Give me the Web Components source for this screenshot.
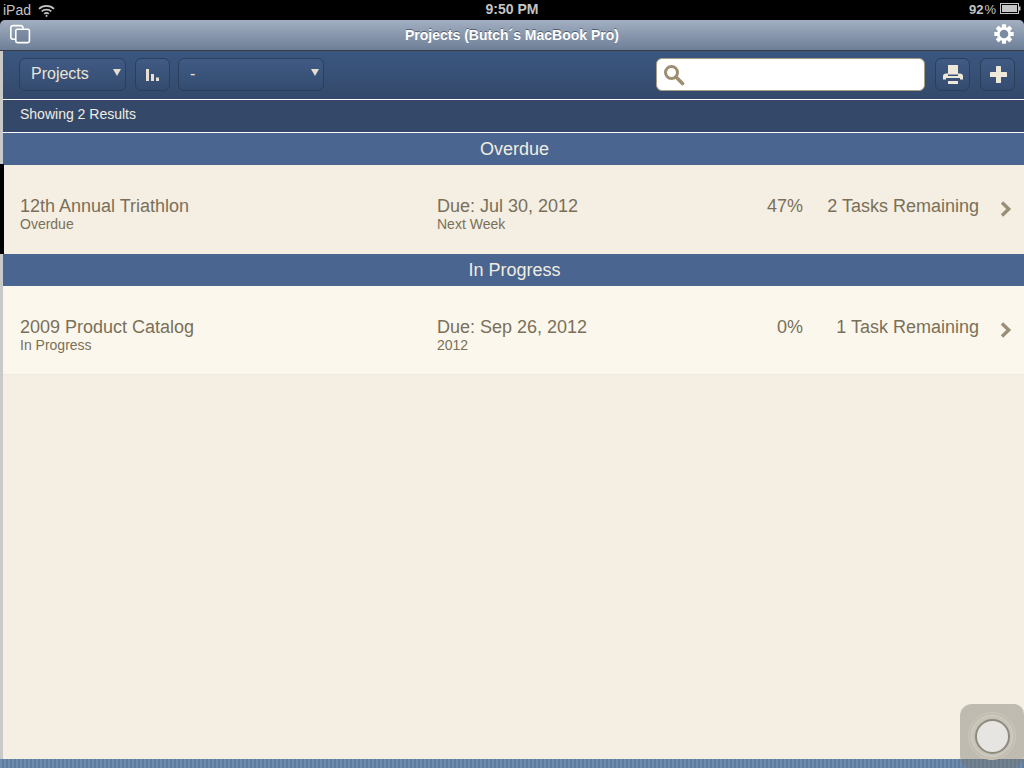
<!DOCTYPE html>
<html>
<head>
<meta charset="utf-8">
<title>Projects</title>
<style>
    html, body { margin: 0; padding: 0; height: 100%; overflow: hidden; background: #000; }
    body { font-family: "Liberation Sans", Arial, sans-serif; }
</style>
</head>
<body>
<project-app>
    <status-bar slot="status"></status-bar>
    <title-bar slot="title">Projects (Butch´s MacBook Pro)</title-bar>
    <tool-bar slot="tools">
        <drop-select style="width:107px">Projects</drop-select>
        <tool-button style="margin-left:9px" icon="chart"></tool-button>
        <drop-select style="width:146px;margin-left:8px">-</drop-select>
        <search-box style="margin-left:auto"></search-box>
        <tool-button style="margin-left:10px" icon="print"></tool-button>
        <tool-button style="margin-left:10px" icon="plus"></tool-button>
    </tool-bar>
    <results-bar slot="results">Showing 2 Results</results-bar>
    <section-head>Overdue</section-head>
    <project-row rail="#000" name="12th Annual Triathlon" state="Overdue" due="Due: Jul 30, 2012" when="Next Week" pct="47%" tasks="2 Tasks Remaining"></project-row>
    <section-head>In Progress</section-head>
    <project-row light name="2009 Product Catalog" state="In Progress" due="Due: Sep 26, 2012" when="2012" pct="0%" tasks="1 Task Remaining"></project-row>
    <assistive-touch slot="overlay"></assistive-touch>
</project-app>

<script>
var appTpl = document.createElement('template');
appTpl.innerHTML = `
    <style>
        :host { display: flex; flex-direction: column; width: 1024px; height: 768px; position: relative; overflow: hidden; background: #000; }
        .body { flex: 1; display: flex; flex-direction: column; background: #f4eee3; border-left: 3px solid #c9c9c9; min-height: 0; }
        .list { flex: 1; display: flex; flex-direction: column; min-height: 0; }
        .foot { height: 9px; background: repeating-linear-gradient(90deg, #6f8cac 0, #6f8cac 2px, #5f7d9f 2px, #5f7d9f 4px); }
    </style>
    <slot name="status"></slot>
    <slot name="title"></slot>
    <div class="body">
        <slot name="tools"></slot>
        <slot name="results"></slot>
        <div class="list"><slot></slot></div>
    </div>
    <div class="foot"></div>
    <slot name="overlay"></slot>
`;
customElements.define('project-app', class extends HTMLElement {
    constructor() {
        super();
        this.attachShadow({mode: 'open'}).appendChild(appTpl.content.cloneNode(true));
    }
});

var statusTpl = document.createElement('template');
statusTpl.innerHTML = `
    <style>
        :host { display: flex; align-items: center; justify-content: space-between; height: 20px; flex: none; background: #000; color: #c4c4c4; font-size: 14px; padding: 0 3px 0 3px; position: relative; }
        .left, .right { display: flex; align-items: center; }
        .left svg { margin-left: 7px; }
        .time { position: absolute; left: 0; right: 0; top: 1px; text-align: center; font-weight: bold; line-height: 17px; font-size: 14px; }
        .right span { font-size: 13px; margin-right: 4px; font-weight: bold; }
        .right span em { font-style: normal; font-weight: normal; margin-left: 1px; }
        .right { margin-top: -2px; }
    </style>
    <div class="left">iPad
        <svg width="17" height="13" viewBox="0 0 17 13" fill="none" stroke="#c4c4c4" stroke-width="1.8">
            <path d="M1 4.8C5 .9 12 .9 16 4.8"/>
            <path d="M3.7 7.4C6.2 5.1 10.8 5.1 13.3 7.4"/>
            <path d="M6.2 9.9C7.5 8.8 9.5 8.8 10.8 9.9"/>
            <path d="M8.5 10.6l1.3 1.4-1.3 1-1.3-1z" fill="#c4c4c4" stroke="none"/>
        </svg>
    </div>
    <div class="time">9:50 PM</div>
    <div class="right"><span>92<em>%</em></span>
        <svg width="21" height="12" viewBox="0 0 21 12">
            <rect x=".5" y=".5" width="18" height="10" fill="none" stroke="#c4c4c4"/>
            <rect x="2" y="2" width="15" height="7" fill="#c4c4c4"/>
            <rect x="19" y="3.5" width="1.5" height="4" fill="#c4c4c4"/>
        </svg>
    </div>
`;
customElements.define('status-bar', class extends HTMLElement {
    constructor() {
        super();
        this.attachShadow({mode: 'open'}).appendChild(statusTpl.content.cloneNode(true));
    }
});

var titleTpl = document.createElement('template');
titleTpl.innerHTML = `
    <style>
        :host { display: flex; align-items: center; justify-content: center; flex: none; padding-bottom: 1px; box-sizing: content-box;
            border-radius: 5px 5px 0 0; background: linear-gradient(#a3afc0, #6d7f98); border-bottom: 1px solid #3a3d42;
            color: #fff; font-size: 14px; font-weight: bold; text-shadow: 0 -1px 0 rgba(40,50,70,.6); position: relative; height: 29px; }
        svg { position: absolute; }
        .tabs { left: 9px; top: 4px; }
        .gear { right: 10px; top: 4px; }
    </style>
    <svg class="tabs" width="22" height="20" viewBox="0 0 22 20" fill="none" stroke="#fff" stroke-width="1.6">
        <path d="M6 15.2H4C2.6 15.2 1.8 14.4 1.8 13V3.8C1.8 2.4 2.6 1.6 4 1.6H11.5C13 1.6 14 2.4 14.3 4.5"/>
        <rect x="6.8" y="5.2" width="13.6" height="13.4" rx="1.5" fill="#5f6f87" fill-opacity=".35"/>
    </svg>
    <svg class="gear" width="20" height="20" viewBox="0 0 20 20">
        <g fill="#fff">
            <rect x="7.9" y=".3" width="4.2" height="19.4" rx=".6"/>
            <rect x="7.9" y=".3" width="4.2" height="19.4" rx=".6" transform="rotate(45 10 10)"/>
            <rect x="7.9" y=".3" width="4.2" height="19.4" rx=".6" transform="rotate(90 10 10)"/>
            <rect x="7.9" y=".3" width="4.2" height="19.4" rx=".6" transform="rotate(135 10 10)"/>
            <circle cx="10" cy="10" r="7"/>
        </g>
        <circle cx="10" cy="10" r="4.3" fill="#7b8ba2"/>
    </svg>
    <slot></slot>
`;
customElements.define('title-bar', class extends HTMLElement {
    constructor() {
        super();
        this.attachShadow({mode: 'open'}).appendChild(titleTpl.content.cloneNode(true));
    }
});

var toolTpl = document.createElement('template');
toolTpl.innerHTML = `
    <style>
        :host { display: flex; align-items: center; flex: none; box-sizing: border-box; padding: 0 9px 1px 16px;
            background: linear-gradient(#3a5780, #34496a); border-bottom: 1px solid #fff; height: 49px; }
    </style>
    <slot></slot>
`;
customElements.define('tool-bar', class extends HTMLElement {
    constructor() {
        super();
        this.attachShadow({mode: 'open'}).appendChild(toolTpl.content.cloneNode(true));
    }
});

var selectTpl = document.createElement('template');
selectTpl.innerHTML = `
    <style>
        :host { display: flex; align-items: center; box-sizing: border-box; height: 33px; flex: none; padding: 0 4px 2px 11px; position: relative;
            border: 1px solid #2b3e5b; border-radius: 6px; background: linear-gradient(#3f5a84, #354c70);
            color: #eae4d6; font-size: 16px; }
        i { position: absolute; right: 4px; top: 10px; width: 0; height: 0; border: 4px solid transparent; border-top: 7px solid #e4decf; border-bottom: 0; }
    </style>
    <slot></slot><i></i>
`;
customElements.define('drop-select', class extends HTMLElement {
    constructor() {
        super();
        this.attachShadow({mode: 'open'}).appendChild(selectTpl.content.cloneNode(true));
    }
});

var icons = {
    chart: '<svg width="14" height="14" viewBox="0 0 14 14" fill="#e8e1d2"><rect x="0" y="1" width="3" height="12"/><rect x="5" y="6" width="3" height="7"/><rect x="10" y="9.5" width="3" height="3.5"/></svg>',
    print: '<svg width="20" height="19" viewBox="0 0 20 19" fill="#efe8d8"><rect x="5" y="0" width="10" height="9.500"/><path d="M3 8.500h2v2.500h10v-2.500h2c1.700 0 3 1 3 2.500v3.500h-3v-1.500H3v1.500H0V11c0-1.500 1.300-2.500 3-2.500z"/><rect x="5" y="16" width="10" height="3"/></svg>',
    plus: '<svg width="17" height="17" viewBox="0 0 17 17" fill="#efe8d8" style="margin-left:2px"><rect x="6" y="0" width="5" height="17" rx=".6"/><rect x="0" y="6" width="17" height="5" rx=".6"/></svg>'
};
var buttonTpl = document.createElement('template');
buttonTpl.innerHTML = `
    <style>
        :host { display: flex; align-items: center; justify-content: center; box-sizing: border-box; width: 35px; height: 33px; flex: none;
            border: 1px solid #2b3e5b; border-radius: 6px; background: linear-gradient(#3f5a84, #354c70); }
        svg { display: block; }
    </style>
    <span class="icon"></span>
`;
customElements.define('tool-button', class extends HTMLElement {
    constructor() {
        super();
        var root = this.attachShadow({mode: 'open'});
        root.appendChild(buttonTpl.content.cloneNode(true));
        root.querySelector('.icon').innerHTML = icons[this.getAttribute('icon')];
    }
});

var searchTpl = document.createElement('template');
searchTpl.innerHTML = `
    <style>
        :host { display: flex; align-items: center; box-sizing: border-box; width: 269px; height: 33px; flex: none; padding-left: 6px;
            background: #fff; border: 1px solid #a89e85; border-radius: 6px; }
    </style>
    <svg width="22" height="22" viewBox="0 0 22 22" fill="none" stroke="#9c8f72">
        <circle cx="8.500" cy="8.500" r="6" stroke-width="3"/>
        <path d="M13 13l6.500 6.500" stroke-width="3.600" stroke-linecap="round"/>
    </svg>
`;
customElements.define('search-box', class extends HTMLElement {
    constructor() {
        super();
        this.attachShadow({mode: 'open'}).appendChild(searchTpl.content.cloneNode(true));
    }
});

var resultsTpl = document.createElement('template');
resultsTpl.innerHTML = `
    <style>
        :host { display: flex; align-items: center; box-sizing: border-box; height: 33px; flex: none; padding: 0 0 4px 17px; background: #34496a;
            border-bottom: 1px solid #fff; color: #f0ece0; font-size: 14px; }
    </style>
    <slot></slot>
`;
customElements.define('results-bar', class extends HTMLElement {
    constructor() {
        super();
        this.attachShadow({mode: 'open'}).appendChild(resultsTpl.content.cloneNode(true));
    }
});

var headTpl = document.createElement('template');
headTpl.innerHTML = `
    <style>
        :host { display: flex; align-items: center; justify-content: center; box-sizing: border-box; height: 32px; padding: 1px 0 0 2px; flex: none; background: #4a6690; color: #f0ece0; font-size: 18px; }
    </style>
    <slot></slot>
`;
customElements.define('section-head', class extends HTMLElement {
    constructor() {
        super();
        this.attachShadow({mode: 'open'}).appendChild(headTpl.content.cloneNode(true));
    }
});

var rowTpl = document.createElement('template');
rowTpl.innerHTML = `
    <style>
        :host { display: flex; align-items: center; box-sizing: border-box; height: 89px; flex: none; padding: 10px 12px 0 17px; position: relative;
            background: #f4eee3; color: #7a7059; border-bottom: 1px solid #f4eee3; }
        :host([light]) { background: #fbf7ed; border-bottom-color: #f0ebdf; }
        .rail { position: absolute; left: -3px; top: -1px; bottom: -1px; width: 4px; }
        .col { display: flex; flex-direction: column; }
        .name { width: 417px; }
        .due { flex: 1; }
        b { font-weight: normal; font-size: 18px; line-height: 18px; }
        small { font-size: 14px; line-height: 15px; margin-top: 2px; }
        .pct { font-size: 18px; width: 60px; text-align: right; }
        .tasks { font-size: 18px; width: 176px; text-align: right; }
        .pct, .tasks { line-height: 20px; margin-bottom: 17px; }
        svg { margin-left: 21px; flex: none; margin-top: -10px; }
    </style>
    <div class="rail"></div>
    <div class="col name"><b class="n"></b><small class="s"></small></div>
    <div class="col due"><b class="d"></b><small class="w"></small></div>
    <div class="pct"></div>
    <div class="tasks"></div>
    <svg width="12" height="16" viewBox="0 0 12 16" fill="none" stroke="#9a8f76" stroke-width="3.400"><path d="M2 1.500L8.700 8 2 14.500"/></svg>
`;
customElements.define('project-row', class extends HTMLElement {
    constructor() {
        super();
        var root = this.attachShadow({mode: 'open'});
        root.appendChild(rowTpl.content.cloneNode(true));
        root.querySelector('.n').textContent = this.getAttribute('name');
        root.querySelector('.s').textContent = this.getAttribute('state');
        root.querySelector('.d').textContent = this.getAttribute('due');
        root.querySelector('.w').textContent = this.getAttribute('when');
        root.querySelector('.pct').textContent = this.getAttribute('pct');
        root.querySelector('.tasks').textContent = this.getAttribute('tasks');
        if (this.getAttribute('rail')) {
            root.querySelector('.rail').style.background = this.getAttribute('rail');
        }
    }
});

var touchTpl = document.createElement('template');
touchTpl.innerHTML = `
    <style>
        :host { position: absolute; right: 0; bottom: 0; width: 64px; height: 64px; box-sizing: border-box; border-radius: 12px 10px 12px 12px;
            background: rgba(120,116,104,.42); display: flex; align-items: center; justify-content: center; }
        .r1 { width: 48px; height: 48px; border-radius: 50%; border: 1px solid #cbc7ba; background: #c2beb1; display: flex; align-items: center; justify-content: center; box-sizing: border-box; }
        .r2 { width: 42px; height: 42px; box-sizing: border-box; border-radius: 50%; background: #c6c3b7; border: 1px solid #d4d1c6; display: flex; align-items: center; justify-content: center; }
        .r3 { width: 35px; height: 35px; box-sizing: border-box; border-radius: 50%; background: #e6e5e1; border: 2px solid #8e8a80; }
    </style>
    <div class="r1"><div class="r2"><div class="r3"></div></div></div>
`;
customElements.define('assistive-touch', class extends HTMLElement {
    constructor() {
        super();
        this.attachShadow({mode: 'open'}).appendChild(touchTpl.content.cloneNode(true));
    }
});
</script>
</body>
</html>
